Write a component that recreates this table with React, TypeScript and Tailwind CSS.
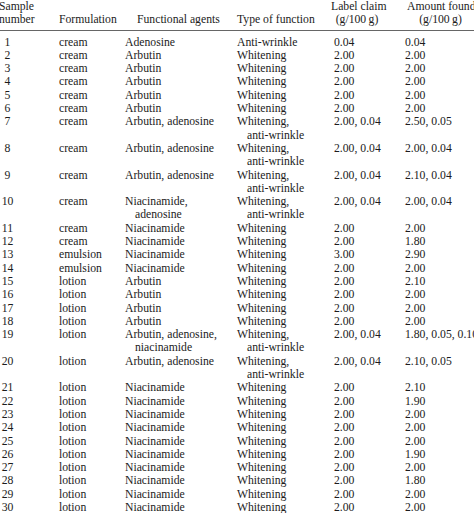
import React from 'react';

type Row = {
  n: number;
  form: string;
  agents: string[];
  func: string[];
  claim: string;
  found: string;
};

const W = 'Whitening';
const WA = ['Whitening,', 'anti-wrinkle'];

const ROWS: Row[] = [
  { n: 1, form: 'cream', agents: ['Adenosine'], func: ['Anti-wrinkle'], claim: '0.04', found: '0.04' },
  { n: 2, form: 'cream', agents: ['Arbutin'], func: [W], claim: '2.00', found: '2.00' },
  { n: 3, form: 'cream', agents: ['Arbutin'], func: [W], claim: '2.00', found: '2.00' },
  { n: 4, form: 'cream', agents: ['Arbutin'], func: [W], claim: '2.00', found: '2.00' },
  { n: 5, form: 'cream', agents: ['Arbutin'], func: [W], claim: '2.00', found: '2.00' },
  { n: 6, form: 'cream', agents: ['Arbutin'], func: [W], claim: '2.00', found: '2.00' },
  { n: 7, form: 'cream', agents: ['Arbutin, adenosine'], func: WA, claim: '2.00, 0.04', found: '2.50, 0.05' },
  { n: 8, form: 'cream', agents: ['Arbutin, adenosine'], func: WA, claim: '2.00, 0.04', found: '2.00, 0.04' },
  { n: 9, form: 'cream', agents: ['Arbutin, adenosine'], func: WA, claim: '2.00, 0.04', found: '2.10, 0.04' },
  { n: 10, form: 'cream', agents: ['Niacinamide,', 'adenosine'], func: WA, claim: '2.00, 0.04', found: '2.00, 0.04' },
  { n: 11, form: 'cream', agents: ['Niacinamide'], func: [W], claim: '2.00', found: '2.00' },
  { n: 12, form: 'cream', agents: ['Niacinamide'], func: [W], claim: '2.00', found: '1.80' },
  { n: 13, form: 'emulsion', agents: ['Niacinamide'], func: [W], claim: '3.00', found: '2.90' },
  { n: 14, form: 'emulsion', agents: ['Niacinamide'], func: [W], claim: '2.00', found: '2.00' },
  { n: 15, form: 'lotion', agents: ['Arbutin'], func: [W], claim: '2.00', found: '2.10' },
  { n: 16, form: 'lotion', agents: ['Arbutin'], func: [W], claim: '2.00', found: '2.00' },
  { n: 17, form: 'lotion', agents: ['Arbutin'], func: [W], claim: '2.00', found: '2.00' },
  { n: 18, form: 'lotion', agents: ['Arbutin'], func: [W], claim: '2.00', found: '2.00' },
  { n: 19, form: 'lotion', agents: ['Arbutin, adenosine,', 'niacinamide'], func: WA, claim: '2.00, 0.04', found: '1.80, 0.05, 0.10' },
  { n: 20, form: 'lotion', agents: ['Arbutin, adenosine'], func: WA, claim: '2.00, 0.04', found: '2.10, 0.05' },
  { n: 21, form: 'lotion', agents: ['Niacinamide'], func: [W], claim: '2.00', found: '2.10' },
  { n: 22, form: 'lotion', agents: ['Niacinamide'], func: [W], claim: '2.00', found: '1.90' },
  { n: 23, form: 'lotion', agents: ['Niacinamide'], func: [W], claim: '2.00', found: '2.00' },
  { n: 24, form: 'lotion', agents: ['Niacinamide'], func: [W], claim: '2.00', found: '2.00' },
  { n: 25, form: 'lotion', agents: ['Niacinamide'], func: [W], claim: '2.00', found: '2.00' },
  { n: 26, form: 'lotion', agents: ['Niacinamide'], func: [W], claim: '2.00', found: '1.90' },
  { n: 27, form: 'lotion', agents: ['Niacinamide'], func: [W], claim: '2.00', found: '2.00' },
  { n: 28, form: 'lotion', agents: ['Niacinamide'], func: [W], claim: '2.00', found: '1.80' },
  { n: 29, form: 'lotion', agents: ['Niacinamide'], func: [W], claim: '2.00', found: '2.00' },
  { n: 30, form: 'lotion', agents: ['Niacinamide'], func: [W], claim: '2.00', found: '2.00' },
];

const GRID = 'grid grid-cols-[59px_66px_112px_97px_71px_1fr]';

function Lines({ lines }: { lines: string[] }) {
  return (
    <div>
      {lines.map((l, i) => (
        <div key={i} className={i > 0 ? 'pl-[10px]' : ''}>
          {l}
        </div>
      ))}
    </div>
  );
}

export default function App() {
  return (
    <div
      className="w-[474px] h-[513px] overflow-hidden bg-white text-[#1c1c1c] text-[11.7px] leading-[13.3px] whitespace-nowrap"
      style={{ fontFamily: '"Liberation Serif", "Times New Roman", serif' }}
    >
      {/* header */}
      <div className={`${GRID} items-end pb-[3px] border-b border-[#666]`}>
        <div className="-ml-[1px]">
          <div>Sample</div>
          <div>number</div>
        </div>
        <div>Formulation</div>
        <div className="pl-[12px]">Functional agents</div>
        <div>Type of function</div>
        <div className="-ml-[3px] w-[52px] text-center">
          <div>Label claim</div>
          <div>(g/100&#8201;g)</div>
        </div>
        <div className="ml-[2px] w-[67px] text-center">
          <div>Amount found</div>
          <div>(g/100&#8201;g)</div>
        </div>
      </div>

      {/* body */}
      <div className="pt-[5px]">
        {ROWS.map((r) => (
          <div key={r.n} className={`${GRID} items-start`}>
            <div className="w-[15px] text-center">{r.n}</div>
            <div>{r.form}</div>
            <Lines lines={r.agents} />
            <Lines lines={r.func} />
            <div>{r.claim}</div>
            <div>{r.found}</div>
          </div>
        ))}
      </div>
    </div>
  );
}
